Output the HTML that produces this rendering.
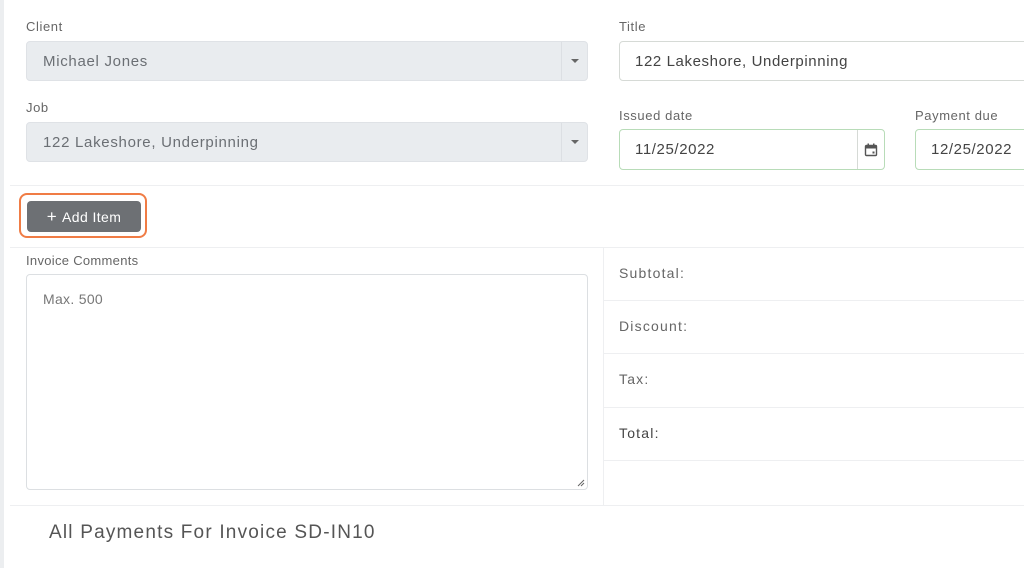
<!DOCTYPE html>
<html><head><style>
*{box-sizing:border-box;margin:0;padding:0}
body{width:1024px;height:568px;overflow:hidden;background:#fff;font-family:"Liberation Sans",sans-serif;position:relative;color:#555}
.a{position:absolute}
.lbl{font-size:13px;color:#666;letter-spacing:.6px}
.sel{background:#e9ecef;border:1px solid #dfe2e6;border-radius:4px;font-size:15px;letter-spacing:.7px;color:#6b6f74;padding-left:16px;display:flex;align-items:center}
.sel .ar{position:absolute;right:0;top:0;bottom:0;width:26px;border-left:1px solid #dcdfe3;display:flex;align-items:center;justify-content:center}
.sel .ar:after{content:"";border:4px solid transparent;border-top:4px solid #666;border-bottom:0}
.inp{border:1px solid #d6dad6;border-radius:4px;font-size:15px;letter-spacing:.6px;color:#444;padding-left:15px;display:flex;align-items:center;background:#fff}
.g{border-color:#b8dcb8}
.hl{height:1px;background:#eeeff1}
.row{font-size:14px;color:#666;letter-spacing:1.2px}
</style></head><body>
<div class="a" style="left:0;top:0;width:4px;height:568px;background:#eceef0"></div>

<div class="a lbl" style="left:26px;top:19px">Client</div>
<div class="a sel" style="left:26px;top:41px;width:562px;height:40px">Michael Jones<div class="ar"></div></div>
<div class="a lbl" style="left:26px;top:100px">Job</div>
<div class="a sel" style="left:26px;top:122px;width:562px;height:40px">122 Lakeshore, Underpinning<div class="ar"></div></div>

<div class="a lbl" style="left:619px;top:19px">Title</div>
<div class="a inp" style="left:619px;top:41px;width:420px;height:40px">122 Lakeshore, Underpinning</div>
<div class="a lbl" style="left:619px;top:108px">Issued date</div>
<div class="a inp g" style="left:619px;top:129px;width:266px;height:41px">11/25/2022
<div class="a" style="right:0;top:0;bottom:0;width:27px;border-left:1px solid #d6dad6;display:flex;align-items:center;justify-content:center">
<svg width="14" height="14" viewBox="0 0 14 14"><rect x="1.5" y="2.5" width="11" height="10" rx="1" fill="none" stroke="#555" stroke-width="1.4"/><rect x="1.5" y="2.5" width="11" height="3" fill="#555"/><rect x="3.5" y="0.5" width="1.5" height="3" fill="#555"/><rect x="9" y="0.5" width="1.5" height="3" fill="#555"/><rect x="8.5" y="8.5" width="2" height="2" fill="#555"/></svg></div></div>
<div class="a lbl" style="left:915px;top:108px">Payment due</div>
<div class="a inp g" style="left:915px;top:129px;width:130px;height:41px">12/25/2022</div>

<div class="a hl" style="left:10px;top:185px;width:1014px"></div>
<div class="a" style="left:19px;top:193px;width:128px;height:45px;border:2px solid #f07c45;border-radius:8px"></div>
<div class="a" style="left:27px;top:201px;width:114px;height:31px;background:#6d7074;border-radius:4px;color:#fff;font-size:14px;letter-spacing:.4px;display:flex;align-items:center;justify-content:center"><span style="font-size:17px;margin-right:5px;line-height:1">+</span>Add Item</div>
<div class="a hl" style="left:10px;top:247px;width:1014px"></div>

<div class="a" style="left:26px;top:253px;font-size:13px;color:#666;letter-spacing:.3px">Invoice Comments</div>
<div class="a" style="left:26px;top:274px;width:562px;height:216px;border:1px solid #dcdfe2;border-radius:4px;font-size:14px;color:#777;padding:16px 0 0 16px;letter-spacing:.3px">Max. 500
<svg class="a" style="right:2px;bottom:2px" width="9" height="9"><path d="M8 2L2 8M8 5L5 8" stroke="#666" stroke-width="1"/></svg></div>

<div class="a" style="left:603px;top:247px;width:1px;height:258px;background:#eeeff1"></div>
<div class="a row" style="left:619px;top:265px">Subtotal:</div>
<div class="a hl" style="left:604px;top:300px;width:420px"></div>
<div class="a row" style="left:619px;top:318px">Discount:</div>
<div class="a hl" style="left:604px;top:353px;width:420px"></div>
<div class="a row" style="left:619px;top:371px">Tax:</div>
<div class="a hl" style="left:604px;top:407px;width:420px"></div>
<div class="a row" style="left:619px;top:425px;color:#444">Total:</div>
<div class="a hl" style="left:604px;top:460px;width:420px"></div>
<div class="a hl" style="left:10px;top:505px;width:1014px"></div>

<div class="a" style="left:49px;top:522px;font-size:19px;color:#555;letter-spacing:1.2px">All Payments For Invoice SD-IN10</div>
</body></html>
